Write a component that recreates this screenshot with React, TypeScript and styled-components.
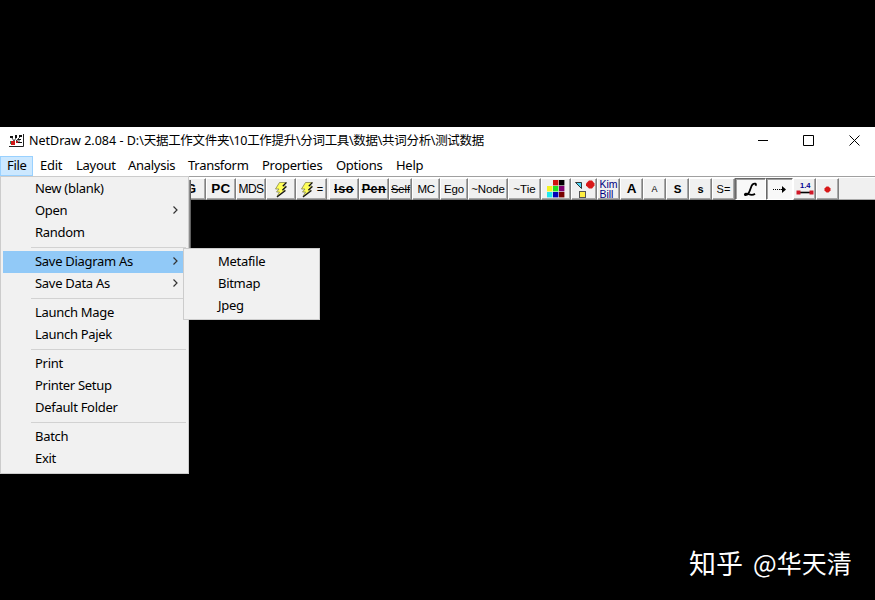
import React from "react";
import styled, { createGlobalStyle } from "styled-components";

const Global = createGlobalStyle`
  * { box-sizing: border-box; }
  body { margin: 0; background: #000; overflow: hidden; }
`;

const Screen = styled.div`
  position: relative;
  width: 875px;
  height: 600px;
  padding-top: 127px;
  background: #000;
  color: #000;
  font: 13px/22px "Noto Sans", "Noto Sans CJK SC", sans-serif;
`;

const TitleBar = styled.header`
  display: flex;
  align-items: center;
  height: 29px;
  padding: 0 15px 2px 9px;
  background: #fff;
`;

const Title = styled.span`
  flex: 1;
  margin-left: 5px;
  font-size: 12.5px;
  white-space: pre;
`;

const Path = styled.span<{ $spacing: number }>`
  letter-spacing: ${(p) => p.$spacing}px;
`;

const WindowButtons = styled.div`
  display: flex;
  gap: 35px;
  svg { display: block; }
`;

const MenuBar = styled.nav`
  display: flex;
  height: 20px;
  background: #fff;
`;

const MenuTab = styled.div<{ $w: number; $open?: boolean }>`
  width: ${(p) => p.$w}px;
  height: 20px;
  padding-left: 7px;
  line-height: 18px;
  white-space: nowrap;
  letter-spacing: -0.28px;
  background: ${(p) => (p.$open ? "#cce8ff" : "transparent")};
  box-shadow: ${(p) => (p.$open ? "inset 0 0 0 1px #99d1ff" : "none")};
`;

const ToolBar = styled.div`
  display: flex;
  height: 24px;
  padding: 1px 0 1px 176px;
  background: #f0f0f0;
  border-top: 1px solid #a0a0a0;
  box-shadow: inset 0 1px #fff, inset 0 -1px #aaa;
`;

const ToolButton = styled.div<{ $w: number; $pressed?: boolean; $gap?: number }>`
  display: flex;
  align-items: center;
  justify-content: center;
  width: ${(p) => p.$w}px;
  height: 22px;
  margin-right: ${(p) => p.$gap ?? 0}px;
  overflow: hidden;
  background: ${(p) => (p.$pressed ? "#f8f8f8" : "#f0f0f0")};
  border: 1px solid;
  border-color: ${(p) => (p.$pressed ? "#696969 #fff #fff #696969" : "#fff #808080 #808080 #fff")};
  box-shadow: ${(p) => (p.$pressed ? "inset 1px 1px #a0a0a0" : "inset -1px -1px #a8a8a8")};
  svg { display: block; flex: none; }
`;

const ToolLabel = styled.span<{ $size?: number; $weight?: number; $strike?: boolean; $ls?: number }>`
  font: ${(p) => p.$weight ?? 400} ${(p) => p.$size ?? 12}px/20px "Liberation Sans", Arial, sans-serif;
  letter-spacing: ${(p) => p.$ls ?? 0}px;
  text-decoration: ${(p) => (p.$strike ? "line-through 1px" : "none")};
  white-space: nowrap;
`;

const Names = styled.span`
  font: 10.5px/10px "Liberation Sans", Arial, sans-serif;
  color: #000080;
`;

const Popup = styled.div<{ $x: number; $y: number; $w: number; $h: number; $shadow?: boolean }>`
  position: absolute;
  left: ${(p) => p.$x}px;
  top: ${(p) => p.$y}px;
  width: ${(p) => p.$w}px;
  height: ${(p) => p.$h}px;
  padding: 1px 2px;
  background: #f1f1f1;
  border: 1px solid #ccc;
`;

const PopupShade = styled.div`
  position: absolute;
  left: 189px;
  top: 180px;
  width: 2px;
  height: 68px;
  background: linear-gradient(90deg, #8c8c8c 50%, #606060 50%);
`;

const Item = styled.div<{ $active?: boolean }>`
  display: flex;
  align-items: center;
  justify-content: space-between;
  height: 22px;
  padding: 0 7px 0 32px;
  white-space: nowrap;
  letter-spacing: -0.3px;
  background: ${(p) => (p.$active ? "#91c9f7" : "transparent")};
`;

const MainItem = styled(Item)`
  line-height: 20px;
  padding-bottom: 2px;
`;

const Rule = styled.div`
  height: 7px;
  margin: 0 0 0 28px;
  padding-top: 3px;
  &::after { content: ""; display: block; height: 1px; background: #d2d2d2; }
`;

const Signature = styled.div`
  position: absolute;
  left: 689px;
  top: 545px;
  display: flex;
  align-items: center;
  gap: 10px;
  color: #fff;
  font: 25px/36px "Noto Sans CJK SC", sans-serif;
  white-space: nowrap;
`;

const Brand = styled.span`
  font-size: 27px;
`;

const Author = styled.span`
  margin-top: -2px;
`;

const AppIcon = () => (
  <svg width="15" height="15" viewBox="0 0 15 15">
    <path d="M0 13.5H14.5V1" fill="none" stroke="#222" />
    <path d="M1 3h3v2H1zM6 2h2v3H6zM10 2h3v2h-3zM9 6h3v1H9zM9 9h4v1H9z" fill="#111" />
    <path d="M3 5l2 3M7 5L5 8M11 4L7 8h4" stroke="#444" fill="none" />
    <rect x="2" y="8" width="4" height="4" fill="#d01818" />
    <path d="M7 8h2v2H7z" fill="#b01820" />
    <path d="M1 8h1v3H1z" fill="#2a8a68" />
  </svg>
);

const Chevron = () => (
  <svg width="7" height="10" viewBox="0 0 7 10">
    <path d="M1.5 1.5L5 5L1.5 8.5" fill="none" stroke="#333" strokeWidth="1.2" />
  </svg>
);

const Bolt = () => (
  <svg width="14" height="17" viewBox="0 0 14 17">
    <path d="M5.5 1.5H12L8.5 5H12L8 9h3L3 15.5L5.5 11H2.500L5 8H1.500z" fill="#ffff58" stroke="#85854c" strokeWidth=".8" />
    <path d="M12.500 1.500L9 5M12.500 5.500L8.500 9M11.500 9.500L3 16" fill="none" stroke="#111" strokeWidth="1.100" />
  </svg>
);

const swatches = [
  ["#f0f0f0", "#d01010", "#000000"],
  ["#f4f420", "#20e020", "#800070"],
  ["#20e8f0", "#0000b8", "#780000"],
];

const Palette = () => (
  <svg width="18" height="18" viewBox="0 0 18 18">
    {swatches.map((row, y) =>
      row.map((c, x) => <rect key={`${x}${y}`} x={x * 6} y={y * 6} width="5.4" height="5.4" fill={c} />)
    )}
  </svg>
);

const Shapes = () => (
  <svg width="21" height="18" viewBox="0 0 21 18">
    <path d="M1.5 2.5h6v6z" fill="#50d8f8" stroke="#222" strokeWidth=".9" />
    <path d="M15 .5h3l2.500 3v2l-2.500 3h-3l-3-3v-2z" fill="#d81818" />
    <rect x="5.5" y="11.5" width="6" height="6" fill="#ffee40" stroke="#555" />
  </svg>
);

const ScriptL = () => (
  <svg width="15" height="15" viewBox="0 0 15 15">
    <path d="M12.500 3.800C14 1.500 11.500.8 9.500 2.500C7.300 4.500 7.500 10.500 4 12.800C1.800 13.800 1 12 3 11.700C5.500 11.500 8.500 14.500 12 11.700" fill="none" stroke="#000" strokeWidth="1.8" />
  </svg>
);

const Arrow = () => (
  <svg width="13" height="9" viewBox="0 0 13 9">
    <path d="M0 4.5h9" stroke="#000" strokeDasharray="1 1" />
    <path d="M7.500 4.500h2" stroke="#000" />
    <path d="M9 1l4 3.5L9 8z" />
  </svg>
);

const Weight = () => (
  <svg width="18" height="16" viewBox="0 0 18 16">
    <text x="4" y="7" fontFamily="Liberation Sans" fontSize="7.5" fontWeight="700" fill="#000090">1.4</text>
    <path d="M3 11.500h12" stroke="#000" strokeWidth="1.6" />
    <path d="M.5 9.500h4v4h-4zM13.500 9.500h4v4h-4z" fill="#d01828" />
  </svg>
);

const Dot = () => (
  <svg width="7" height="7" viewBox="0 0 7 7">
    <path d="M2.5.5h2l2 2v2l-2 2h-2l-2-2v-2z" fill="#d81818" />
  </svg>
);

export default function App() {
  return (
    <Screen>
      <Global />
      <TitleBar>
        <AppIcon />
        <Title>
          NetDraw 2.084 - D:\<Path $spacing={-0.31}>天据工作文件夹\10工作提升\分词工具\数据\共词分析\测试数据</Path>
        </Title>
        <WindowButtons>
          <svg width="11" height="11"><path d="M1 5.5h10" stroke="#000" /></svg>
          <svg width="11" height="11"><path d="M.5.5h10v10h-10z" fill="none" stroke="#000" /></svg>
          <svg width="11" height="11"><path d="M.5.5l10 10M10.5.5l-10 10" stroke="#000" /></svg>
        </WindowButtons>
      </TitleBar>
      <MenuBar>
        <MenuTab $w={33} $open>File</MenuTab>
        <MenuTab $w={36}>Edit</MenuTab>
        <MenuTab $w={52}>Layout</MenuTab>
        <MenuTab $w={60}>Analysis</MenuTab>
        <MenuTab $w={74}>Transform</MenuTab>
        <MenuTab $w={74}>Properties</MenuTab>
        <MenuTab $w={60}>Options</MenuTab>
        <MenuTab $w={50}>Help</MenuTab>
      </MenuBar>
      <ToolBar>
        <ToolButton $w={30}><ToolLabel $size={13} $weight={700}>G</ToolLabel></ToolButton>
        <ToolButton $w={30}><ToolLabel $size={13.5} $weight={700} $ls={0.4}>PC</ToolLabel></ToolButton>
        <ToolButton $w={30}><ToolLabel $size={12} $ls={-0.6}>MDS</ToolLabel></ToolButton>
        <ToolButton $w={30}><Bolt /></ToolButton>
        <ToolButton $w={31} $gap={2}><Bolt /><ToolLabel $size={11}>&nbsp;=</ToolLabel></ToolButton>
        <ToolButton $w={30}><ToolLabel $size={12.5} $weight={700} $strike $ls={0.6}>Iso</ToolLabel></ToolButton>
        <ToolButton $w={30}><ToolLabel $size={12.5} $weight={700} $strike $ls={0.6}>Pen</ToolLabel></ToolButton>
        <ToolButton $w={23}><ToolLabel $size={11} $strike>Self</ToolLabel></ToolButton>
        <ToolButton $w={28}><ToolLabel $size={11.5} $ls={-0.4}>MC</ToolLabel></ToolButton>
        <ToolButton $w={28}><ToolLabel $size={11.5} $ls={-0.2}>Ego</ToolLabel></ToolButton>
        <ToolButton $w={40}><ToolLabel $size={11.5} $ls={-0.1}>~Node</ToolLabel></ToolButton>
        <ToolButton $w={33}><ToolLabel $size={11.5}>~Tie</ToolLabel></ToolButton>
        <ToolButton $w={30}><Palette /></ToolButton>
        <ToolButton $w={26}><Shapes /></ToolButton>
        <ToolButton $w={23}><Names>Kim<br />Bill</Names></ToolButton>
        <ToolButton $w={23}><ToolLabel $size={13.5} $weight={700}>A</ToolLabel></ToolButton>
        <ToolButton $w={23}><ToolLabel $size={9}>A</ToolLabel></ToolButton>
        <ToolButton $w={23}><ToolLabel $size={11.5} $weight={700}>S</ToolLabel></ToolButton>
        <ToolButton $w={23}><ToolLabel $size={11} $weight={700}>s</ToolLabel></ToolButton>
        <ToolButton $w={23}><ToolLabel $size={11}>S=</ToolLabel></ToolButton>
        <ToolButton $w={31} $pressed><ScriptL /></ToolButton>
        <ToolButton $w={27} $pressed><Arrow /></ToolButton>
        <ToolButton $w={23}><Weight /></ToolButton>
        <ToolButton $w={23}><Dot /></ToolButton>
      </ToolBar>
      <PopupShade />
      <Popup $x={0} $y={176} $w={189} $h={298}>
        <MainItem>New (blank)</MainItem>
        <MainItem>Open<Chevron /></MainItem>
        <MainItem>Random</MainItem>
        <Rule />
        <MainItem $active>Save Diagram As<Chevron /></MainItem>
        <MainItem>Save Data As<Chevron /></MainItem>
        <Rule />
        <MainItem>Launch Mage</MainItem>
        <MainItem>Launch Pajek</MainItem>
        <Rule />
        <MainItem>Print</MainItem>
        <MainItem>Printer Setup</MainItem>
        <MainItem>Default Folder</MainItem>
        <Rule />
        <MainItem>Batch</MainItem>
        <MainItem>Exit</MainItem>
      </Popup>
      <Popup $x={183} $y={248} $w={137} $h={72}>
        <Item>Metafile</Item>
        <Item>Bitmap</Item>
        <Item>Jpeg</Item>
      </Popup>
      <Signature><Brand>知乎</Brand><Author>@华天清</Author></Signature>
    </Screen>
  );
}
